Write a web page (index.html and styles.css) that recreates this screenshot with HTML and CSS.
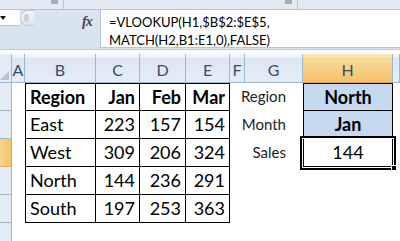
FILE: index.html
```html
<!DOCTYPE html>
<html lang="en">
  <head>
    <meta charset="UTF-8" />
    <title>VLOOKUP MATCH</title>
    <link rel="stylesheet" href="styles.css">
  </head>
  <body>
    <div class="sheet">
      <div class="ribbon">
        <span class="rib-icon"></span>
        <span class="rib-line"></span>
        <span class="rib-gap"></span>
        <span class="rib-icon"></span>
        <span class="rib-line"></span>
      </div>

      <div class="fbar">
        <div class="namebox"><span class="arrow"></span></div>
        <div class="grip"><span class="dot"></span></div>
        <div class="fx">fx</div>
        <div class="formula">=VLOOKUP(H1,$B$2:$E$5,<br>MATCH(H2,B1:E1,0),FALSE)</div>
      </div>

      <div class="grid">
        <!-- column headers -->
        <div class="corner"><span class="tri"></span></div>
        <div class="ch">A</div>
        <div class="ch">B</div>
        <div class="ch">C</div>
        <div class="ch">D</div>
        <div class="ch">E</div>
        <div class="ch">F</div>
        <div class="ch">G</div>
        <div class="ch ch-sel">H</div>
        <div class="ch"></div>

        <!-- row 1 -->
        <div class="rh"></div>
        <div class="c"></div>
        <div class="c t tl tt b">Region</div>
        <div class="c t tt b num">Jan</div>
        <div class="c t tt b num">Feb</div>
        <div class="c t tt b num">Mar</div>
        <div class="c"></div>
        <div class="c lbl">Region</div>
        <div class="c key b">North</div>
        <div class="c"></div>

        <!-- row 2 -->
        <div class="rh"></div>
        <div class="c"></div>
        <div class="c t tl">East</div>
        <div class="c t num">223</div>
        <div class="c t num">157</div>
        <div class="c t num">154</div>
        <div class="c"></div>
        <div class="c lbl">Month</div>
        <div class="c key key2 b">Jan</div>
        <div class="c"></div>

        <!-- row 3 -->
        <div class="rh rh-sel"></div>
        <div class="c"></div>
        <div class="c t tl">West</div>
        <div class="c t num">309</div>
        <div class="c t num">206</div>
        <div class="c t num">324</div>
        <div class="c"></div>
        <div class="c lbl">Sales</div>
        <div class="c active">144<span class="handle"></span></div>
        <div class="c"></div>

        <!-- row 4 -->
        <div class="rh"></div>
        <div class="c"></div>
        <div class="c t tl">North</div>
        <div class="c t num">144</div>
        <div class="c t num">236</div>
        <div class="c t num">291</div>
        <div class="c"></div>
        <div class="c"></div>
        <div class="c"></div>
        <div class="c"></div>

        <!-- row 5 -->
        <div class="rh"></div>
        <div class="c"></div>
        <div class="c t tl">South</div>
        <div class="c t num">197</div>
        <div class="c t num">253</div>
        <div class="c t num">363</div>
        <div class="c"></div>
        <div class="c"></div>
        <div class="c"></div>
        <div class="c"></div>

        <!-- row 6 -->
        <div class="rh"></div>
        <div class="c"></div>
        <div class="c"></div>
        <div class="c"></div>
        <div class="c"></div>
        <div class="c"></div>
        <div class="c"></div>
        <div class="c"></div>
        <div class="c"></div>
        <div class="c"></div>
      </div>
    </div>
  </body>
</html>
```

FILE: styles.css
```css
* {
  margin: 0;
  padding: 0;
  box-sizing: border-box;
}

:root {
  --bar-bg: #d9e4f1;
  --head-bg: #e2ebf6;
  --head-line: #9eb6ce;
  --head-text: #3a4d68;
  --sel-top: #f9dc9f;
  --sel-bottom: #f2c266;
  --key-bg: #c5d9f1;
}

body {
  width: 400px;
  height: 241px;
  overflow: hidden;
  background: #ffffff;
  font-family: Lato, "Liberation Sans", sans-serif;
}

.sheet {
  display: flex;
  flex-direction: column;
}

/* ribbon remains at the very top */
.ribbon {
  height: 10px;
  background: #e3eaf3;
  border-bottom: 1px solid #b4c4d8;
  display: flex;
  align-items: flex-start;
  padding-left: 51px;
}

.rib-icon {
  width: 7px;
  height: 4px;
  background: #a7adb5;
}

.rib-line {
  width: 1px;
  height: 9px;
  margin-left: 5px;
  background: #b9c6d6;
}

.rib-gap {
  width: 221px;
}

/* formula bar */
.fbar {
  height: 40px;
  background: var(--bar-bg);
  border-bottom: 1px solid #b7c6d8;
  display: flex;
  align-items: flex-start;
}

.namebox {
  width: 20px;
  height: 16px;
  background: #ffffff;
  border-bottom: 1px solid #b7c6d8;
  position: relative;
}

.arrow {
  position: absolute;
  left: 0;
  top: 6px;
  border-left: 3px solid transparent;
  border-right: 3px solid transparent;
  border-top: 4px solid #111;
}

.grip {
  width: 14px;
  height: 16px;
  border-radius: 8px 0 0 8px;
  background: linear-gradient(#f4f6f9, #dfe5ec);
  border: 1px solid #c3ccd7;
  border-right: none;
  display: flex;
  align-items: center;
  padding-left: 3px;
}

.dot {
  width: 5px;
  height: 8px;
  border-radius: 50%;
  background: #c9d0d9;
}

.fx {
  width: 66px;
  padding-left: 48px;
  padding-top: 4px;
  font-family: "Liberation Serif", serif;
  font-style: italic;
  font-weight: bold;
  font-size: 14px;
  color: #3d4450;
  letter-spacing: -1px;
}

.formula {
  flex: 1;
  height: 38px;
  background: #ffffff;
  border-left: 1px solid #b7c6d8;
  border-bottom: 1px solid #b7c6d8;
  padding: 3px 0 0 8px;
  font-size: 13px;
  line-height: 18px;
  color: #000;
}

/* worksheet grid */
.grid {
  margin-top: 4px;
  display: grid;
  grid-template-columns: 12px 13px 71px 44px 46px 44px 15px 58px 90px minmax(0, 1fr);
  grid-template-rows: 29px repeat(6, 28px);
}

.corner {
  background: var(--head-bg);
  border-right: 1px solid var(--head-line);
  border-bottom: 1px solid var(--head-line);
  position: relative;
}

.tri {
  position: absolute;
  right: 2px;
  bottom: 2px;
  border-left: 9px solid transparent;
  border-bottom: 9px solid #b5c4d6;
}

.ch {
  background: linear-gradient(#f1f5fb 0, #f1f5fb 3px, #dce6f3 4px, #e4ecf7 100%);
  border-right: 1px solid var(--head-line);
  border-bottom: 1px solid var(--head-line);
  color: var(--head-text);
  font-size: 16px;
  text-align: center;
  line-height: 32px;
}

.ch-sel {
  background: linear-gradient(#fbe6b8 0, #fbe6b8 3px, var(--sel-top) 4px, var(--sel-bottom) 100%);
  border-bottom-color: #e8a83c;
}

.rh {
  background: var(--head-bg);
  border-right: 1px solid var(--head-line);
  border-bottom: 1px solid var(--head-line);
}

.rh-sel {
  background: linear-gradient(90deg, #f8d58f, #f3c467);
  border-bottom-color: #e8b055;
}

.c {
  font-size: 18px;
  line-height: 27px;
  color: #000;
  white-space: nowrap;
  padding: 0 4px;
}

.b {
  font-weight: bold;
}

.t {
  border-right: 1px solid #000;
  border-bottom: 1px solid #000;
}

.tl {
  border-left: 1px solid #000;
}

.tt {
  border-top: 1px solid #000;
  line-height: 26px;
}

.num {
  text-align: right;
}

.lbl {
  display: flex;
  justify-content: flex-end;
  padding: 0 17px 0 0;
  font-size: 15px;
  color: #1d1d1d;
}

.key {
  background: var(--key-bg);
  border: 1px solid #000;
  text-align: center;
  line-height: 26px;
}

.key2 {
  border-top: none;
  line-height: 27px;
}

.active {
  position: relative;
  text-align: center;
  border: 1px solid #000;
  border-top: none;
  box-shadow: 0 0 0 1px #fff, 0 0 0 3px #000;
  line-height: 27px;
}

.handle {
  position: absolute;
  right: -5px;
  bottom: -5px;
  width: 6px;
  height: 6px;
  background: #000;
  border: 1px solid #fff;
}
```
